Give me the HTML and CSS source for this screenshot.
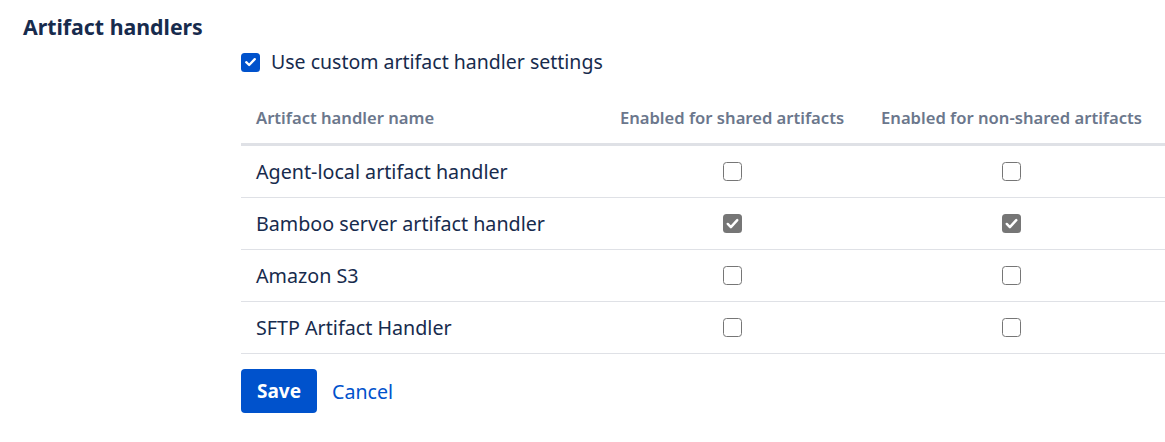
FILE: index.html
```html
<!DOCTYPE html>
<html>
<head>
<meta charset="utf-8">
<link rel="stylesheet" href="styles.css">
</head>
<body>
<div class="page">
  <h2 class="title">Artifact handlers</h2>
  <div class="form">
    <label class="custom">
      <span class="cb cb-primary"><svg viewBox="0 0 20 20" width="20" height="20"><path d="M5.5 10.2 L8.6 13.2 L14.5 7" fill="none" stroke="#fff" stroke-width="2.4" stroke-linecap="round" stroke-linejoin="round"/></svg></span>
      <span class="custom-label">Use custom artifact handler settings</span>
    </label>
    <div class="table">
      <div class="row head">
        <div class="cell name">Artifact handler name</div>
        <div class="cell mid">Enabled for shared artifacts</div>
        <div class="cell mid last">Enabled for non-shared artifacts</div>
      </div>
      <div class="row">
        <div class="cell name">Agent-local artifact handler</div>
        <div class="cell mid"><span class="cb"></span></div>
        <div class="cell mid last"><span class="cb"></span></div>
      </div>
      <div class="row">
        <div class="cell name">Bamboo server artifact handler</div>
        <div class="cell mid"><span class="cb cb-checked"><svg viewBox="0 0 20 20" width="19" height="19"><path d="M5 10.5 L8.3 13.8 L15 6.5" fill="none" stroke="#fff" stroke-width="2.6" stroke-linecap="round" stroke-linejoin="round"/></svg></span></div>
        <div class="cell mid last"><span class="cb cb-checked"><svg viewBox="0 0 20 20" width="19" height="19"><path d="M5 10.5 L8.3 13.8 L15 6.5" fill="none" stroke="#fff" stroke-width="2.6" stroke-linecap="round" stroke-linejoin="round"/></svg></span></div>
      </div>
      <div class="row">
        <div class="cell name">Amazon S3</div>
        <div class="cell mid"><span class="cb"></span></div>
        <div class="cell mid last"><span class="cb"></span></div>
      </div>
      <div class="row">
        <div class="cell name">SFTP Artifact Handler</div>
        <div class="cell mid"><span class="cb"></span></div>
        <div class="cell mid last"><span class="cb"></span></div>
      </div>
    </div>
    <div class="actions">
      <button class="btn-save">Save</button>
      <a class="cancel" href="#">Cancel</a>
    </div>
  </div>
</div>
</body>
</html>
```
FILE: styles.css
```css
* { box-sizing: border-box; }
html, body { margin: 0; padding: 0; background: #fff; }
body {
  font-family: "Noto Sans", "Open Sans", sans-serif;
  color: #172b4d;
  width: 1165px;
  overflow: hidden;
}
.page { padding: 13px 0 0 0; }
.title {
  margin: 0 0 0 23px;
  font-size: 21.3px;
  line-height: 28px;
  font-weight: 700;
  color: #172b4d;
}
.form { margin-left: 241px; }
.custom {
  display: flex;
  align-items: center;
  gap: 11px;
  height: 26px;
  margin-top: 8px;
}
.custom-label { font-size: 19.5px; line-height: 26px; }
.cb {
  display: inline-flex;
  align-items: center;
  justify-content: center;
  width: 19px;
  height: 19px;
  border: 1.5px solid #767676;
  border-radius: 3.5px;
  background: #fff;
  flex: none;
}
.cb-primary { width: 19px; height: 19px; border: none; background: #0052cc; border-radius: 3.5px; }
.cb-checked { border: none; background: #767676; }
.table { margin-top: 17px; }
.row {
  display: grid;
  grid-template-columns: 359px 264px 301px;
  height: 52px;
  border-bottom: 1px solid #dfe1e6;
  align-items: center;
}
.row.head { height: 54px; border-bottom: 3px solid #dfe1e6; }
.cell { padding: 0 15px; font-size: 19.7px; white-space: nowrap; }
.head .cell { font-size: 16.6px; font-weight: 600; color: #6b778c; }
.mid { text-align: center; display: flex; justify-content: center; }
.mid.last { padding-right: 21px; }
.actions {
  display: flex;
  align-items: center;
  gap: 15px;
  margin-top: 15px;
}
.btn-save {
  width: 76px;
  height: 44px;
  border: none;
  border-radius: 4px;
  background: #0052cc;
  color: #fff;
  font-family: inherit;
  font-size: 19px;
  font-weight: 700;
  padding: 0;
}
.cancel { color: #0052cc; text-decoration: none; font-size: 19.6px; }
```
